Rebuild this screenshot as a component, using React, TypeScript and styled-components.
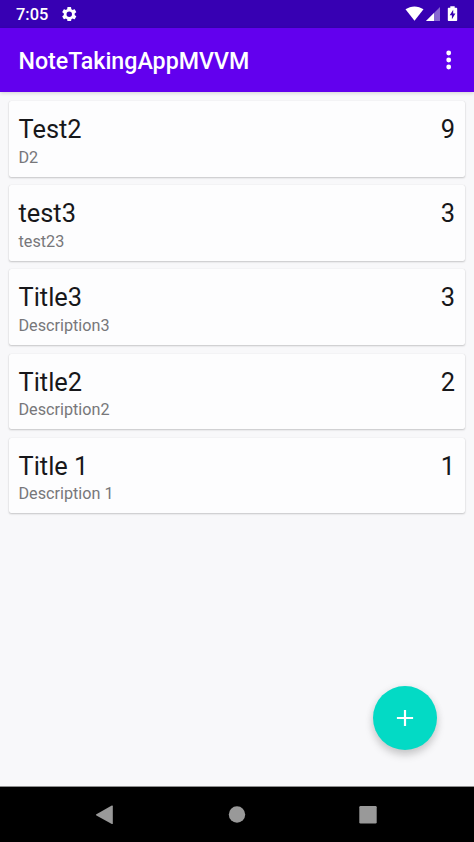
import React from "react";
import styled, { createGlobalStyle } from "styled-components";

const GlobalStyle = createGlobalStyle`
  * { box-sizing: border-box; }
  body { margin: 0; font-family: Roboto, sans-serif; background: #f8f8fa; }
`;

const Screen = styled.div`
  position: relative;
  width: 474px;
  height: 842px;
  display: flex;
  flex-direction: column;
  overflow: hidden;
  background: #f8f8fa;
`;

const StatusBar = styled.header`
  height: 27.5px;
  flex: none;
  display: flex;
  align-items: center;
  justify-content: space-between;
  padding: 0 16px;
  background: #3700b3;
  color: #fff;
`;

const StatusGroup = styled.div`
  display: flex;
  align-items: center;
`;

const Clock = styled.span`
  width: 46px;
  font-size: 16.4px;
  font-weight: 500;
  line-height: 28px;
  padding-top: 2px;
`;

const StatusIcons = styled.svg`
  display: block;
  margin-right: -3px;
`;

const AppBar = styled.div`
  height: 64.5px;
  flex: none;
  display: flex;
  align-items: center;
  justify-content: space-between;
  padding: 0 22px 0 18.5px;
  background: #6200ee;
  color: #fff;
  z-index: 1;
  box-shadow: 0 1px 4px rgba(0, 0, 0, 0.16);
`;

const AppTitle = styled.h1`
  margin: 0;
  padding-top: 2px;
  font-size: 23.2px;
  font-weight: 500;
  line-height: 28px;
`;

const NoteList = styled.main`
  flex: 1;
  display: flex;
  flex-direction: column;
  gap: 8.6px;
  padding: 9px 9px 0;
`;

const NoteCard = styled.article`
  height: 75.6px;
  flex: none;
  padding: 12px 10px 0 9.5px;
  border-radius: 2px;
  background: #fdfdfe;
  box-shadow: 0 1px 2px rgba(0, 0, 0, 0.2), 0 0 1px rgba(0, 0, 0, 0.14);
`;

const NoteHeading = styled.div`
  display: flex;
  justify-content: space-between;
  font-size: 25.4px;
  line-height: 32px;
  color: #17171a;
`;

const Description = styled.p`
  margin: 2.6px 0 0;
  font-size: 16.2px;
  line-height: 20px;
  color: #77777a;
`;

const AddButton = styled.button`
  position: absolute;
  right: 37px;
  bottom: 92px;
  width: 64.5px;
  height: 64.5px;
  display: flex;
  align-items: center;
  justify-content: center;
  padding: 0;
  border: 0;
  border-radius: 50%;
  background: #03dac5;
  box-shadow: 0 5px 8px rgba(0, 0, 0, 0.18), 0 1px 10px rgba(0, 0, 0, 0.06);
`;

const NavigationBar = styled.nav`
  height: 56px;
  flex: none;
  display: flex;
  justify-content: space-between;
  align-items: center;
  padding: 0 97px 0 95px;
  border-top: 1px solid #8f8f8f;
  background: #000;
`;

const notes = [
  { title: "Test2", description: "D2", priority: 9 },
  { title: "test3", description: "test23", priority: 3 },
  { title: "Title3", description: "Description3", priority: 3 },
  { title: "Title2", description: "Description2", priority: 2 },
  { title: "Title 1", description: "Description 1", priority: 1 },
];

export default function App() {
  return (
    <Screen>
      <GlobalStyle />
      <StatusBar>
        <StatusGroup>
          <Clock>7:05</Clock>
          <svg width="14.5" height="14.5" viewBox="2.400 2.400 19.200 19.200" fill="#fff">
            <path d="M19.14 12.94c.04-.3.06-.61.06-.94 0-.32-.02-.64-.07-.94l2.03-1.58a.49.49 0 0 0 .12-.61l-1.92-3.32a.488.488 0 0 0-.59-.22l-2.39.96c-.5-.38-1.03-.7-1.62-.94l-.36-2.54a.484.484 0 0 0-.48-.41h-3.84c-.24 0-.43.17-.47.41l-.36 2.54c-.59.24-1.13.57-1.62.94l-2.39-.96c-.22-.08-.47 0-.59.22L2.74 8.87c-.12.21-.08.47.12.61l2.03 1.58c-.05.3-.09.63-.09.94s.02.64.07.94l-2.03 1.58a.49.49 0 0 0-.12.61l1.92 3.32c.12.22.37.29.59.22l2.39-.96c.5.38 1.03.7 1.62.94l.36 2.54c.05.24.24.41.48.41h3.84c.24 0 .44-.17.47-.41l.36-2.54c.59-.24 1.13-.56 1.62-.94l2.39.96c.22.08.47 0 .59-.22l1.92-3.32c.12-.22.07-.47-.12-.61zM12 15.6a3.6 3.6 0 1 1 0-7.2 3.6 3.6 0 0 1 0 7.2" />
          </svg>
        </StatusGroup>
        <StatusIcons width="57" height="18" viewBox="404 5 57 18" fill="#fff">
          <path d="M405.5 9.3C410.8 5.4 418.2 5.4 423.5 9.3L414.5 20.7Z" />
          <path d="M440 7v14h-14z" fill="#fff" fillOpacity=".4" />
          <path d="M434 13v8h-8z" />
          <path
            fillRule="evenodd"
            d="M450.3 6.2h4.4v1.6h1.5c.6 0 1 .4 1 1v11.1c0 .6-.4 1-1 1h-7.4c-.6 0-1-.4-1-1V8.800c0-.6.4-1 1-1h1.500zM453.200 9.700l-3.500 5.500h2.200v4l3.500-5.600h-2.200z"
          />
        </StatusIcons>
      </StatusBar>
      <AppBar>
        <AppTitle>NoteTakingAppMVVM</AppTitle>
        <svg width="6" height="20" viewBox="0 0 6 20" fill="#fff">
          <circle cx="2.700" cy="3" r="2.4" />
          <circle cx="2.700" cy="10" r="2.4" />
          <circle cx="2.700" cy="17" r="2.4" />
        </svg>
      </AppBar>
      <NoteList>
        {notes.map((note) => (
          <NoteCard key={note.title}>
            <NoteHeading>
              <span>{note.title}</span>
              <span>{note.priority}</span>
            </NoteHeading>
            <Description>{note.description}</Description>
          </NoteCard>
        ))}
      </NoteList>
      <NavigationBar>
        <svg width="19" height="20" viewBox="0 0 19 20" fill="#999">
          <path d="M1.400 9.200 16.800.6q1-.5 1 .6v17.200q0 1-1 .5L1.400 10.400q-1-.6 0-1.200z" />
        </svg>
        <svg width="18" height="18" viewBox="0 0 18 18" fill="#999">
          <circle cx="9" cy="8.500" r="8.200" />
        </svg>
        <svg width="18" height="18" viewBox="0 0 18 18" fill="#999">
          <rect x=".3" y="0" width="17.400" height="17.400" rx="1.200" />
        </svg>
      </NavigationBar>
      <AddButton aria-label="Add note">
        <svg width="18" height="18" viewBox="0 0 18 18" fill="none" stroke="#fff" strokeWidth="2.200">
          <path d="M9 .9v16.200M.9 9h16.200" />
        </svg>
      </AddButton>
    </Screen>
  );
}
